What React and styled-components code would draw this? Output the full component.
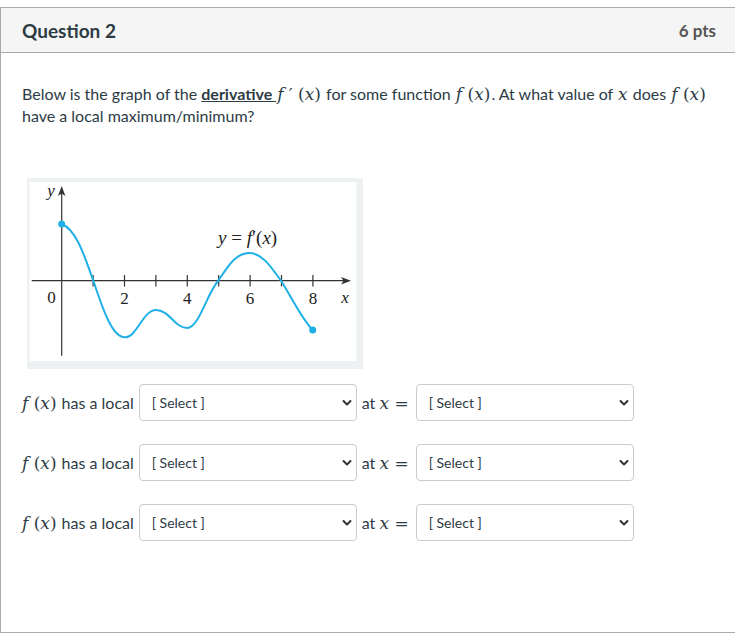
import React from "react";
import styled, { createGlobalStyle } from "styled-components";

const Global = createGlobalStyle`
  html, body { margin: 0; padding: 0; background: #fff; }
  body { font-family: Lato, "Open Sans", sans-serif; color: #2d3b45; overflow: hidden; }
`;

const Page = styled.div`
  padding-top: 7px;
  width: 735px;
  height: 640px;
  box-sizing: border-box;
`;

const Card = styled.section`
  border: 1px solid #a9a9a9;
  border-right: none;
  height: 626px;
  box-sizing: border-box;
  display: flex;
  flex-direction: column;
`;

const Header = styled.header`
  height: 45px;
  box-sizing: border-box;
  background: #f5f5f5;
  border-bottom: 1px solid #a9a9a9;
  display: flex;
  align-items: center;
  justify-content: space-between;
  padding: 0 19px 0 21px;
`;

const Title = styled.h2`
  margin: 0;
  font-size: 19px;
  font-weight: 700;
  color: #2d3b45;
`;

const Points = styled.span`
  font-size: 17px;
  font-weight: 700;
  color: #555;
`;

const Body = styled.div`
  padding: 30px 10px 0 21px;
`;

const Prompt = styled.p`
  margin: 0;
  font-size: 16px;
  line-height: 22px;
`;

const Strong = styled.strong`
  text-decoration: underline;
  font-weight: 700;
`;

const Math = styled.span`
  font-family: "DejaVu Serif", "Liberation Serif", serif;
  font-size: 17px;
  white-space: nowrap;
  margin: ${(p) => p.$m || "0 1px"};
`;

const Var = styled.i`
  font-style: italic;
`;

const Figure = styled.div`
  margin: 51px 0 0 5px;
  line-height: 0;
`;

const Rows = styled.div`
  margin-top: 15px;
  display: flex;
  flex-direction: column;
  gap: 23px;
`;

const Row = styled.div`
  display: flex;
  align-items: center;
  font-size: 16px;
  height: 37px;
`;

const Label = styled.span`
  margin-right: 5px;
  white-space: nowrap;
`;

const SelectWrap = styled.div`
  position: relative;
  width: 218px;
  height: 37px;
  flex: none;
`;

const Select = styled.select`
  appearance: none;
  -webkit-appearance: none;
  width: 100%;
  height: 100%;
  box-sizing: border-box;
  border: 1px solid #c7cdd1;
  border-radius: 4px;
  background: #fff;
  padding: 0 30px 0 12px;
  font-family: Lato, sans-serif;
  font-size: 14px;
  color: #2d3b45;
  outline: none;
`;

const Chevron = styled.svg`
  position: absolute;
  right: 5px;
  top: 50%;
  transform: translateY(-50%);
  pointer-events: none;
`;

const AtLabel = styled.span`
  margin: 0 7px 0 5px;
  white-space: nowrap;
`;

function Fx() {
  return (
    <Math $m="0 5px 0 0">
      <Var>f</Var> (<Var>x</Var>)
    </Math>
  );
}

function Dropdown() {
  return (
    <SelectWrap>
      <Select defaultValue="">
        <option value="">[ Select ]</option>
      </Select>
      <Chevron width="10" height="8" viewBox="0 0 10 8">
        <path d="M1.5 2 L5 5.5 L8.5 2" fill="none" stroke="#333" strokeWidth="2" strokeLinecap="round" strokeLinejoin="round" />
      </Chevron>
    </SelectWrap>
  );
}

function Graph() {
  const ticks = [1, 2, 3, 4, 5, 6, 7, 8];
  const X = (u) => 34.7 + 31.4 * u;
  const blue = "#1fb0e6";
  return (
    <svg width="336" height="191" viewBox="0 0 336 191">
      <rect x="0" y="0" width="336" height="191" fill="#eef1f2" />
      <rect x="2.5" y="4" width="327" height="179" fill="#fff" />
      <line x1="4.7" y1="102.7" x2="320" y2="102.7" stroke="#333" strokeWidth="1.2" />
      <path d="M324 102.7 L314 99 L316.5 102.7 L314 106.4 Z" fill="#333" />
      <line x1="34.7" y1="177.7" x2="34.7" y2="12" stroke="#333" strokeWidth="1.2" />
      <path d="M34.7 8 L31 18 L34.7 15.5 L38.4 18 Z" fill="#333" />
      {ticks.map((u) => (
        <line key={u} x1={X(u)} y1="97" x2={X(u)} y2="108.5" stroke="#333" strokeWidth="1.2" />
      ))}
      <g fontFamily="'Liberation Serif', 'DejaVu Serif', serif" fontSize="17" fill="#222">
        <text x="24.5" y="125" textAnchor="middle">0</text>
        {[2, 4, 6, 8].map((u) => (
          <text key={u} x={X(u)} y="126" textAnchor="middle">{u}</text>
        ))}
        <text x="318" y="125" textAnchor="middle" fontStyle="italic">x</text>
        <text x="24" y="18" textAnchor="middle" fontStyle="italic">y</text>
        <text x="191" y="66" fontSize="19">
          <tspan fontStyle="italic">y</tspan> = <tspan fontStyle="italic">f</tspan>′(<tspan fontStyle="italic">x</tspan>)
        </text>
      </g>
      <path
        d="M34.7 46 C50 52 58 80 66.3 102.7 C74 125 84 159.3 98 159.3 C110 159.3 116 132 129 132 C142 132 148 150 160 150 C172 150 180 115 191.3 102.7 C200 90 208 75 222.3 75 C236 75 246 92 254 102.7 C264 118 274 140 285.7 152"
        fill="none"
        stroke={blue}
        strokeWidth="2"
      />
      <circle cx="34.7" cy="46" r="3.5" fill={blue} />
      <circle cx="285.7" cy="152" r="3.5" fill={blue} />
    </svg>
  );
}

export default function App() {
  return (
    <>
      <Global />
      <Page>
        <Card>
          <Header>
            <Title>Question 2</Title>
            <Points>6 pts</Points>
          </Header>
          <Body>
            <Prompt>
              Below is the graph of the <Strong>derivative </Strong>
              <Math>
                <Var>f</Var> ′ (<Var>x</Var>)
              </Math>{" "}
              for some function{" "}
              <Math>
                <Var>f</Var> (<Var>x</Var>)
              </Math>
              . At what value of{" "}
              <Math>
                <Var>x</Var>
              </Math>{" "}
              does{" "}
              <Math>
                <Var>f</Var> (<Var>x</Var>)
              </Math>{" "}
              have a local maximum/minimum?
            </Prompt>
            <Figure>
              <Graph />
            </Figure>
            <Rows>
              {[0, 1, 2].map((i) => (
                <Row key={i}>
                  <Fx />
                  <Label>has a local</Label>
                  <Dropdown />
                  <AtLabel>
                    at{" "}
                    <Math $m="0">
                      <Var>x</Var> =
                    </Math>
                  </AtLabel>
                  <Dropdown />
                </Row>
              ))}
            </Rows>
          </Body>
        </Card>
      </Page>
    </>
  );
}
